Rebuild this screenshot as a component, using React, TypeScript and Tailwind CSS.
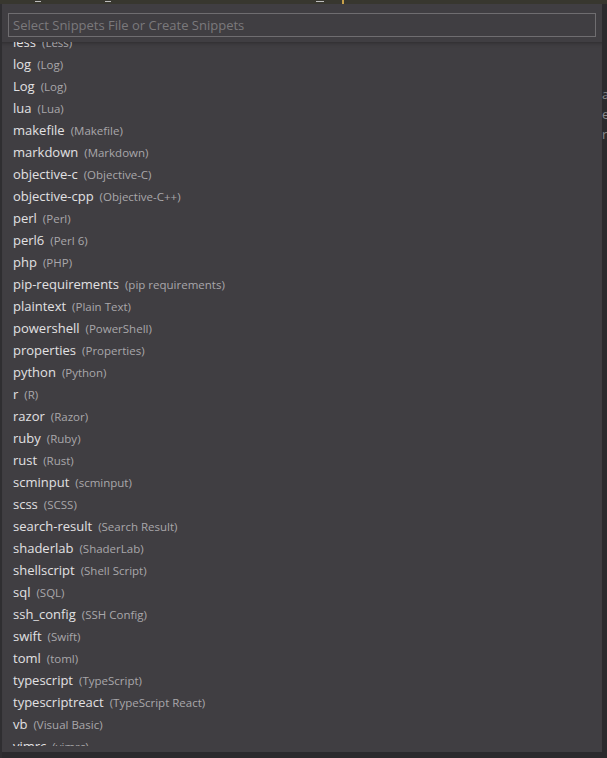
import React from 'react';

const items: [string, string][] = [
  ['less', 'Less'],
  ['log', 'Log'],
  ['Log', 'Log'],
  ['lua', 'Lua'],
  ['makefile', 'Makefile'],
  ['markdown', 'Markdown'],
  ['objective-c', 'Objective-C'],
  ['objective-cpp', 'Objective-C++'],
  ['perl', 'Perl'],
  ['perl6', 'Perl 6'],
  ['php', 'PHP'],
  ['pip-requirements', 'pip requirements'],
  ['plaintext', 'Plain Text'],
  ['powershell', 'PowerShell'],
  ['properties', 'Properties'],
  ['python', 'Python'],
  ['r', 'R'],
  ['razor', 'Razor'],
  ['ruby', 'Ruby'],
  ['rust', 'Rust'],
  ['scminput', 'scminput'],
  ['scss', 'SCSS'],
  ['search-result', 'Search Result'],
  ['shaderlab', 'ShaderLab'],
  ['shellscript', 'Shell Script'],
  ['sql', 'SQL'],
  ['ssh_config', 'SSH Config'],
  ['swift', 'Swift'],
  ['toml', 'toml'],
  ['typescript', 'TypeScript'],
  ['typescriptreact', 'TypeScript React'],
  ['vb', 'Visual Basic'],
  ['vimrc', 'vimrc'],
  ['xml', 'XML'],
];

const App = () => {
  return (
    <div className="w-[607px] h-[758px] bg-[#2b2a2d] overflow-hidden flex flex-col font-['Open_Sans','Noto_Sans',sans-serif]">
      {/* title strip behind the picker */}
      <div className="h-[4px] bg-[#38372f] flex items-start shrink-0">
        <div className="ml-[35px] mt-[1px] w-[6px] h-[1px] bg-[#bdbdbd]" />
        <div className="ml-[64px] mt-[1px] w-[6px] h-[1px] bg-[#bdbdbd]" />
        <div className="ml-[205px] mt-[1px] w-[8px] h-[1px] bg-[#bdbdbd]" />
        <div className="ml-[18px] w-[2px] h-[4px] bg-[#c8a04a]" />
      </div>

      <div className="flex flex-1 min-h-0">
        <div className="w-[2px] bg-[#2f2e31]" />

        <div className="w-[600px] h-[748px] bg-[#403e42] flex flex-col pt-[9px] pb-[6px] px-[6px]">
          <div className="h-[24px] border border-[#6f6d70] flex items-center px-[4px] shrink-0">
            <span className="text-[13px] text-[#7b797c] leading-none">Select Snippets File or Create Snippets</span>
          </div>

          <div className="mt-[5px] flex-1 min-h-0 overflow-hidden -mx-[6px] shadow-[inset_0_5px_5px_-5px_rgba(0,0,0,0.45)]">
            <div className="-mt-[10px]">
              {items.map(([label, desc], i) => (
                <div key={i} className="h-[22px] flex items-center pl-[11px] whitespace-nowrap">
                  <span className="text-[13px] text-[#e2e1e3]">{label}</span>
                  <span className="ml-[6px] text-[11.5px] text-[#a9a7aa]">({desc})</span>
                </div>
              ))}
            </div>
          </div>
        </div>

        <div className="flex-1 bg-[#2b2a2d] flex flex-col pt-[82px] gap-[4px] text-[13px] text-[#8a898c] leading-[16px] overflow-hidden">
          <span>a</span>
          <span>e</span>
          <span>r</span>
        </div>
      </div>
    </div>
  );
};

export default App;
